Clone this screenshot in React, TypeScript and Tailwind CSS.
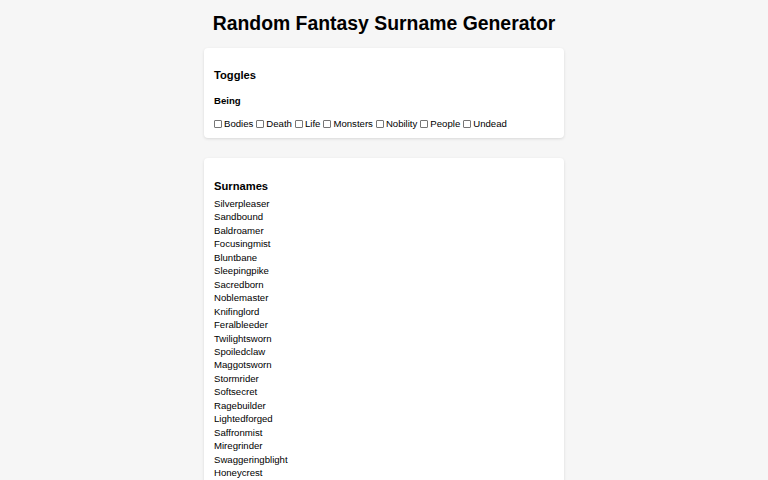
const beings = ['Bodies', 'Death', 'Life', 'Monsters', 'Nobility', 'People', 'Undead']

const surnames = [
  'Silverpleaser', 'Sandbound', 'Baldroamer', 'Focusingmist', 'Bluntbane', 'Sleepingpike',
  'Sacredborn', 'Noblemaster', 'Knifinglord', 'Feralbleeder', 'Twilightsworn', 'Spoiledclaw',
  'Maggotsworn', 'Stormrider', 'Softsecret', 'Ragebuilder', 'Lightedforged', 'Saffronmist',
  'Miregrinder', 'Swaggeringblight', 'Honeycrest',
]

export default function App() {
  return (
    <div className="h-screen overflow-hidden bg-[#f6f6f6] font-['Liberation_Sans',Arial,sans-serif] text-black">
      <div className="mx-auto w-[360px]">
        <h1 className="pt-[12px] pb-[13px] text-center text-[19.4px] font-bold leading-[23px]">
          Random Fantasy Surname Generator
        </h1>

        {/* toggles */}
        <div className="rounded-[4px] bg-white px-[10px] pt-[21px] pb-[9px] shadow-[0_1px_3px_rgba(0,0,0,0.12)]">
          <h3 className="text-[11.2px] font-bold leading-[13px]">Toggles</h3>
          <h4 className="mt-[13px] text-[9.6px] font-bold leading-[11px]">Being</h4>
          <div className="mt-[12px] flex flex-wrap items-center text-[9.6px] leading-[11px]">
            {beings.map((b) => (
              <label key={b} className="flex items-center">
                <input
                  type="checkbox"
                  className="mr-[2px] h-[8px] w-[8px] appearance-none rounded-[1px] border border-[#767676] bg-white"
                />
                <span className="mr-[3px]">{b}</span>
              </label>
            ))}
          </div>
        </div>

        {/* results */}
        <div className="mt-[20px] rounded-[4px] bg-white px-[10px] pt-[22px] pb-[40px] shadow-[0_1px_3px_rgba(0,0,0,0.12)]">
          <h3 className="text-[11.2px] font-bold leading-[13px]">Surnames</h3>
          <ul className="mt-[4px] text-[9.6px] leading-[13.45px]">
            {surnames.map((s) => (
              <li key={s}>{s}</li>
            ))}
          </ul>
        </div>
      </div>
    </div>
  )
}
